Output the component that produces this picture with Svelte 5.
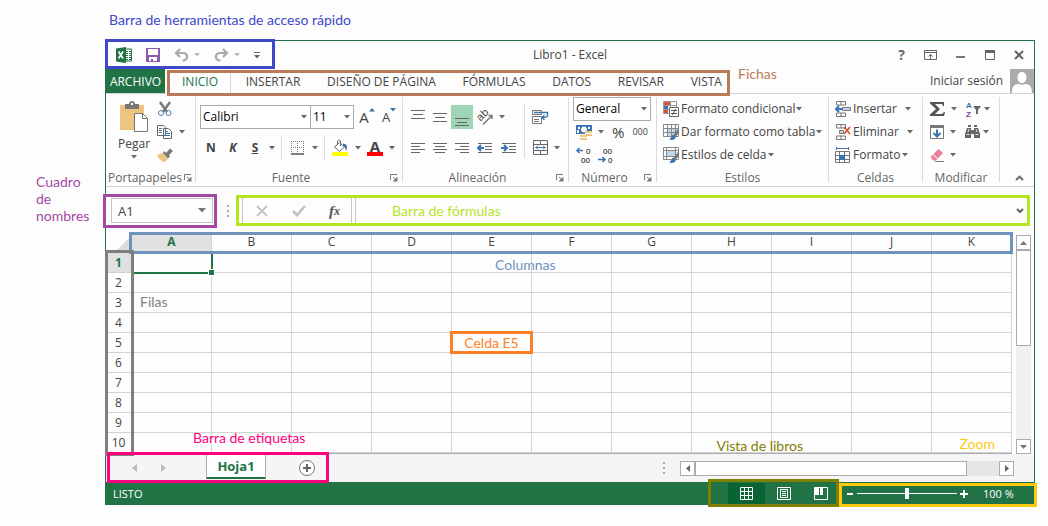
<script>
	const tabs = ['INICIO', 'INSERTAR', 'DISEÑO DE PÁGINA', 'FÓRMULAS', 'DATOS', 'REVISAR', 'VISTA'];
	const columns = ['A', 'B', 'C', 'D', 'E', 'F', 'G', 'H', 'I', 'J', 'K'];
	const rows = [1, 2, 3, 4, 5, 6, 7, 8, 9, 10];

	let activeTab = $state('INICIO');
	let font = $state('Calibri');
	let size = $state('11');
	let format = $state('General');
	let cell = $state('A1');
	let formula = $state('');
	let zoom = $state(100);
</script>

{#snippet arrow()}
	<svg class="arrow" width="6" height="4" viewBox="0 0 6 4"><path d="M0 0h6L3 3.5z" fill="currentColor" /></svg>
{/snippet}

{#snippet drop(name)}
	<button class="drop" aria-label={name}>{@render arrow()}</button>
{/snippet}

{#snippet launcher(name)}
	<button class="launcher" aria-label={name}>
		<svg width="8" height="8" viewBox="0 0 8 8"><path d="M.5 6V.5H7M3 3l3 3" fill="none" stroke="#777" /><path d="M7.5 3v4.5H3V7l4-4z" fill="#777" /></svg>
	</button>
{/snippet}

{#snippet lines(d, name, active)}
	<button class="tool" class:active aria-label={name}>
		<svg width="16" height="20" viewBox="0 0 16 20"><path {d} fill="none" stroke="#666" /></svg>
	</button>
{/snippet}

{#snippet indent(d, name)}
	<button class="tool wide" aria-label={name}>
		<svg width="16" height="12" viewBox="0 0 16 12">
			<path d="M1 1.5h14M8 4.5h7M8 7.5h7M1 10.5h14" stroke="#666" />
			<path {d} fill="none" stroke="#3a73b0" stroke-width="2" />
		</svg>
	</button>
{/snippet}

{#snippet cells()}
	<path d="M1.5 4V.5h9V4M6 .5V4M1.5 12v3.500h9V12M6 12v3.500M1.500 12h9M1.500 4h9" fill="none" stroke="#777" />
{/snippet}

{#snippet brush()}
	<path d="M15.500 4v5l-3 4-2-2z" fill="#777" />
	<path d="M10 10.500l3 2.500c-1 3-4 3.500-7 2.500 2-.5 2-3 4-5z" fill="#3a73b0" />
{/snippet}

<div class="page">
	<p class="note quick-note">Barra de herramientas de acceso rápido</p>
	<p class="note name-note">Cuadro de nombres</p>

	<main class="window">
		<header class="titlebar">
			<div class="quick">
				<svg width="16" height="16" viewBox="0 0 16 16">
					<path d="M9 2h6.500v12H9" fill="#fff" stroke="#217346" />
					<path d="M10 4.500h2M13 4.500h2M10 6.500h2M13 6.500h2M10 8.500h2M13 8.500h2M10 10.500h2M13 10.500h2M10 12.500h2M13 12.500h2" stroke="#217346" />
					<path d="M0 1.500L10 0v16L0 14.500z" fill="#217346" />
					<path d="M2.500 4.500l4.500 7M7 4.500l-4.500 7" stroke="#fff" stroke-width="1.600" />
				</svg>
				<button aria-label="Guardar">
					<svg width="14" height="14" viewBox="0 0 14 14"><path d="M0 0h14v14H0z" fill="#8c5bab" /><path d="M2 1h10v6H2zM3 9h8v4H7v-2H5v2H3z" fill="#fdfdfd" /></svg>
				</button>
				<button class="muted" aria-label="Deshacer">
					<svg width="15" height="14" viewBox="0 0 15 14"><path d="M6 1L2 5l4 4M2 5h7c5 0 5.500 6 1 7.500H8.500" fill="none" stroke="#aaa" stroke-width="2.200" /></svg>
					{@render arrow()}
				</button>
				<button class="muted" aria-label="Rehacer">
					<svg width="15" height="14" viewBox="0 0 15 14"><path d="M9 1l4 4-4 4M13 5H6C1 5 .5 11 5 12.500h1.500" fill="none" stroke="#aaa" stroke-width="2.200" /></svg>
					{@render arrow()}
				</button>
				<button aria-label="Personalizar">
					<svg width="6" height="7" viewBox="0 0 6 7"><path d="M0 0h6v1H0zM0 3h6L3 6.500z" fill="#666" /></svg>
				</button>
			</div>
			<h1>Libro1 - Excel</h1>
			<div class="controls">
				<button class="help" aria-label="Ayuda">?</button>
				<button aria-label="Opciones de la cinta">
					<svg width="13" height="10" viewBox="0 0 13 10"><path d="M.5.5h12v9H.5zM.5 2.500h12M6.500 9V4.500M4.500 6.500l2-2 2 2" fill="none" stroke="#666" /></svg>
				</button>
				<button aria-label="Minimizar">
					<svg width="10" height="10" viewBox="0 0 10 10"><path d="M0 6h9v2H0z" fill="#777" /></svg>
				</button>
				<button aria-label="Maximizar">
					<svg width="10" height="10" viewBox="0 0 10 10"><path d="M.5.5h9v9h-9z" fill="none" stroke="#666" /><path d="M0 0h10v3H0z" fill="#666" /></svg>
				</button>
				<button aria-label="Cerrar">
					<svg width="10" height="10" viewBox="0 0 10 10"><path d="M1 1l8 8M9 1L1 9" stroke="#666" stroke-width="2" /></svg>
				</button>
			</div>
		</header>

		<div class="tabbar">
			<button class="file">ARCHIVO</button>
			<nav>
				{#each tabs as tab}
					<button class:current={tab === activeTab} onclick={() => (activeTab = tab)}>{tab}</button>
				{/each}
			</nav>
			<span class="note tabs-note">Fichas</span>
			<a class="signin" href="#cuenta">Iniciar sesión</a>
			<svg width="24" height="24" viewBox="0 0 24 24"><path d="M0 0h24v24H0z" fill="#ababab" /><path d="M12 3c6 0 6 11 0 11S6 3 12 3zM2 24c0-6 2-9 7-9l3 1 3-1c5 0 7 3 7 9z" fill="#fff" /></svg>
		</div>

		<div class="ribbon">
			<section>
				<div class="body clipboard">
					<button class="paste">
						<svg width="30" height="32" viewBox="0 0 30 32">
							<path d="M1 4h24v25H1z" fill="#edc57e" />
							<path d="M6 8V3h4c0-4 6-4 6 0h4v5z" fill="#777" /><path d="M12 2h2v2h-2z" fill="#fff" />
							<path d="M15.500 12.500h8l5 5v13h-13z" fill="#fff" stroke="#777" /><path d="M23.500 12.500v5h5" fill="none" stroke="#777" />
						</svg>
						Pegar
						{@render arrow()}
					</button>
					<div class="stack">
						<button aria-label="Cortar">
							<svg width="16" height="16" viewBox="0 0 16 16"><path d="M3 1l7 10M13 1L6 11" stroke="#777" stroke-width="2.400" /><circle cx="4" cy="12" r="2.500" fill="none" stroke="#4a80b5" /><circle cx="11.500" cy="12" r="2.500" fill="none" stroke="#4a80b5" /></svg>
						</button>
						<button aria-label="Copiar">
							<svg width="16" height="16" viewBox="0 0 16 16">
								<path d="M.5 1.500h6l2 2v8h-8zM6.500 4.500h5l3 3v7h-8z" fill="#fff" stroke="#666" />
								<path d="M2 4.500h3M2 6.500h3M2 8.500h3M8 7.500h3M8 9.500h5M8 11.500h5" stroke="#3a73b0" />
							</svg>
							{@render arrow()}
						</button>
						<button aria-label="Copiar formato">
							<svg width="16" height="16" viewBox="0 0 16 16"><path d="M6 6l5 6-4 3.500C4 14 1 11 0 8z" fill="#edc57e" /><path d="M7 4l2 2 4-4.500 3 2.500-4 4 1 1.500-2 2-5-5.500z" fill="#777" /></svg>
						</button>
					</div>
				</div>
				<footer><h2>Portapapeles</h2>{@render launcher('Portapapeles')}</footer>
			</section>

			<section>
				<div class="body two">
					<div class="row">
						<label class="select font">
							<select aria-label="Fuente" bind:value={font}><option>Calibri</option><option>Arial</option></select>
							{@render arrow()}
						</label>
						<label class="select size">
							<select aria-label="Tamaño" bind:value={size}><option>11</option><option>12</option></select>
							{@render arrow()}
						</label>
						<button class="tool letter" aria-label="Aumentar tamaño">A<svg width="6" height="12" viewBox="0 0 6 12"><path d="M0 3.500L3 0l3 3.500z" fill="#3a73b0" /></svg></button>
						<button class="tool letter small" aria-label="Disminuir tamaño">A<svg width="6" height="12" viewBox="0 0 6 12"><path d="M0 0h6L3 3.500z" fill="#3a73b0" /></svg></button>
					</div>
					<div class="row">
						<button class="tool"><b>N</b></button>
						<button class="tool"><b><i>K</i></b></button>
						<button class="tool"><b><u>S</u></b></button>
						{@render drop('Subrayado')}
						<hr />
						<button class="tool wide" aria-label="Bordes">
							<svg width="13" height="14" viewBox="0 0 13 14"><path d="M0 .5h13M0 6.500h13M.5 0v13M6.500 0v13M12.500 0v13" stroke="#777" stroke-dasharray="1 1" /><path d="M0 13h13" stroke="#555" stroke-width="1.500" /></svg>
						</button>
						{@render drop('Bordes')}
						<hr />
						<button class="tool wide" aria-label="Color de relleno">
							<svg width="16" height="16" viewBox="0 0 16 16"><path d="M11 4c4-1 5 4 3 7-1-2 0-4-3-5z" fill="#3a73b0" /><path d="M7.500 2.500l5 4.500-5 4.500-5-4.500z" fill="#fff" stroke="#666" /><path d="M5.500 5V1c1-1.200 2.500-1.200 3 0v5" fill="none" stroke="#666" /><path d="M0 12h16v4H0z" fill="#ffff00" /></svg>
						</button>
						{@render drop('Color de relleno')}
						<button class="tool fontcolor" aria-label="Color de fuente"><b>A</b></button>
						{@render drop('Color de fuente')}
					</div>
				</div>
				<footer><h2>Fuente</h2>{@render launcher('Fuente')}</footer>
			</section>

			<section>
				<div class="body align">
					<div class="two">
						<div class="row">
							{@render lines('M1 3.500h14M3 7.500h10M1 11.500h14', 'Alinear arriba')}
							{@render lines('M1 6.500h14M3 10.500h10M1 14.500h14', 'Alinear en el medio')}
							{@render lines('M1 11.500h14M3 15.500h10M1 18.500h14', 'Alinear abajo', true)}
							<button class="tool wide" aria-label="Orientación">
								<svg width="18" height="18" viewBox="0 0 18 18"><text class="slanted" x="1" y="11" transform="rotate(-45 6 8)" fill="#444">ab</text><path d="M7 16.500L16 7.500M12.500 7.500H16V11" fill="none" stroke="#777" stroke-width="1.500" /></svg>
							</button>
							{@render drop('Orientación')}
						</div>
						<div class="row">
							{@render lines('M1 5.500h14M1 8.500h9M1 11.500h14M1 14.500h9', 'Alinear a la izquierda')}
							{@render lines('M1 5.500h14M3 8.500h10M1 11.500h14M3 14.500h10', 'Centrar')}
							{@render lines('M1 5.500h14M6 8.500h9M1 11.500h14M6 14.500h9', 'Alinear a la derecha')}
							{@render indent('M7 6H1M4 3L1 6l3 3', 'Disminuir sangría')}
							{@render indent('M0 6h6M3 3l3 3-3 3', 'Aumentar sangría')}
						</div>
					</div>
					<hr />
					<div class="two">
						<div class="row">
							<button class="tool wide" aria-label="Ajustar texto">
								<svg width="16" height="16" viewBox="0 0 16 16"><path d="M.5 1.500h9v4h-9zM.5 7.500h9v7h-9zM2 10.500h5M2 12.500h5" fill="none" stroke="#777" /><path d="M2 3.500h13.500v3c0 1.500-1 2-5 2M12.500 6l-2.500 2.500 2.500 2.500" fill="none" stroke="#3a73b0" stroke-width="1.400" /></svg>
							</button>
						</div>
						<div class="row">
							<button class="tool wide" aria-label="Combinar y centrar">
								<svg width="15" height="15" viewBox="0 0 15 15"><path d="M.5.5h14v14H.5zM.5 4.500h14M.5 10.500h14M7.500.5v4M7.500 10.500v4" fill="none" stroke="#666" /><path d="M2.500 7.500h10M5 5.500l-2 2 2 2M10 5.500l2 2-2 2" fill="none" stroke="#3a73b0" /></svg>
							</button>
							{@render drop('Combinar')}
						</div>
					</div>
				</div>
				<footer><h2>Alineación</h2>{@render launcher('Alineación')}</footer>
			</section>

			<section>
				<div class="body stack number">
					<label class="select">
						<select aria-label="Formato de número" bind:value={format}><option>General</option><option>Moneda</option></select>
						{@render arrow()}
					</label>
					<div class="row">
						<button aria-label="Moneda">
							<svg width="16" height="16" viewBox="0 0 16 16"><path d="M0 1h16v9H0z" fill="#3a73b0" /><path d="M2 3h2v2H2zM12 3h2v2h-2zM5 5.500C5 1.500 11 1.500 11 5.500S5 9.500 5 5.500zM1 6h2v3H1z" fill="#fff" /><path d="M9 7h7v5H9zM4 11h7v5H4z" fill="#edc57e" /><path d="M9 9.500h7M4 13.500h7" stroke="#fff" /></svg>
						</button>
						{@render drop('Moneda')}
						<button class="percent">%</button>
						<button class="thousands">000</button>
					</div>
					<div class="row decimals">
						<button aria-label="Aumentar decimales">
							<svg width="16" height="18" viewBox="0 0 16 18"><path d="M7 4.500H1M3.500 2L1 4.500 3.500 7" fill="none" stroke="#3a73b0" stroke-width="1.500" /><text x="10" y="8">0</text><text x="5" y="17">00</text></svg>
						</button>
						<button aria-label="Disminuir decimales">
							<svg width="16" height="18" viewBox="0 0 16 18"><path d="M0 13.500h7M4.500 11L7 13.500 4.500 16" fill="none" stroke="#3a73b0" stroke-width="1.500" /><text x="5" y="8">00</text><text x="10" y="17">0</text></svg>
						</button>
					</div>
				</div>
				<footer><h2>Número</h2>{@render launcher('Número')}</footer>
			</section>

			<section>
				<div class="body stack labelled">
					<button>
						<svg width="16" height="16" viewBox="0 0 16 16"><path d="M.5.5h13v12H.5zM.5 4.500h13M.5 8.500h13M7.500.5v12" fill="none" stroke="#999" /><path d="M1 1h6v3H1zM1 9h4v3H1z" fill="#d65532" /><path d="M1 5h4v3H1z" fill="#3a73b0" /><path d="M6.500 6.500h9v9h-9z" fill="#fff" stroke="#666" /><path d="M8 9.500h6M8 12.500h6M12.500 8l-3 6" stroke="#555" /></svg>
						Formato condicional{@render arrow()}
					</button>
					<button>
						<svg width="16" height="16" viewBox="0 0 16 16"><path d="M5 5h9v7H5z" fill="#c3d5e8" /><path d="M.5.5h15v12H.5zM.5 4.500h15M.5 8.500h15M4.500.5v12M8.500.5v12M12.500.5v12" fill="none" stroke="#888" />{@render brush()}</svg>
						Dar formato como tabla{@render arrow()}
					</button>
					<button>
						<svg width="16" height="16" viewBox="0 0 16 16"><path d="M4 4h9v6H4z" fill="#c3d5e8" /><path d="M.5.5h15v12H.5zM.5 3.500h15M.5 9.500h15M3.500.5v12M12.500.5v12" fill="none" stroke="#888" />{@render brush()}</svg>
						Estilos de celda{@render arrow()}
					</button>
				</div>
				<footer><h2>Estilos</h2></footer>
			</section>

			<section>
				<div class="body stack labelled">
					<button class="spaced">
						<svg width="16" height="16" viewBox="0 0 16 16">{@render cells()}<path d="M7.500 6.500h8v3h-8z" fill="#c3d5e8" stroke="#777" /><path d="M8 8H1M4 5L1 8l3 3" fill="none" stroke="#3a73b0" stroke-width="2" /></svg>
						Insertar{@render arrow()}
					</button>
					<button class="spaced">
						<svg width="16" height="16" viewBox="0 0 16 16">{@render cells()}<path d="M4.500 6.500h4v3h-4z" fill="#c3d5e8" stroke="#777" /><path d="M9 3l6 7M15 3l-6 7" stroke="#d65532" stroke-width="1.800" /></svg>
						Eliminar{@render arrow()}
					</button>
					<button>
						<svg width="16" height="16" viewBox="0 0 16 16"><path d="M1.500 0v3M13.500 0v3M2 1.500h11" stroke="#3a73b0" /><path d="M.5 4.500h14v11H.5zM.5 8.500h14M.5 12.500h14M4.500 4.500v11M9.500 4.500v11" fill="none" stroke="#777" /><path d="M4 8h6v5H4z" fill="#3a73b0" /></svg>
						Formato{@render arrow()}
					</button>
				</div>
				<footer><h2>Celdas</h2></footer>
			</section>

			<section>
				<div class="body modify">
					<button aria-label="Autosuma">
						<svg width="15" height="16" viewBox="0 0 15 16"><path d="M0 1h14v4h-1l-1-2H5l5 5-5 5h7l2-2h1l-1 4H0v-1.500L6 8 0 2.500z" fill="#555" /></svg>
						{@render arrow()}
					</button>
					<button aria-label="Ordenar y filtrar">
						<svg width="16" height="18" viewBox="0 0 16 18"><text class="strong" x="1" y="8" fill="#3a73b0">A</text><text class="strong" x="1" y="17" fill="#8040a0">Z</text><path d="M8 6h8l-3 4v4h-2v-4z" fill="#666" /></svg>
						{@render arrow()}
					</button>
					<button aria-label="Rellenar">
						<svg width="14" height="14" viewBox="0 0 14 14"><path d="M.5.5h13v13H.5z" fill="#fff" stroke="#777" /><path d="M0 0h14v3H0z" fill="#777" /><path d="M7 4.500v7M3.500 8L7 11.500 10.500 8" fill="none" stroke="#3a73b0" stroke-width="2" /></svg>
						{@render arrow()}
					</button>
					<button aria-label="Buscar">
						<svg width="15" height="14" viewBox="0 0 15 14"><path d="M2 3h4v2h3V3h4l2 6v4H9V9H6v4H0V9zM3 0h3v2H3zM9 0h3v2H9z" fill="#666" /><path d="M1.500 9.500h3M10.500 9.500h3M4 4L3 7M11 4l1 3" stroke="#fff" stroke-width=".8" /></svg>
						{@render arrow()}
					</button>
					<button aria-label="Borrar">
						<svg width="14" height="14" viewBox="0 0 14 14"><path d="M8.500 1L13 5l-7 7.500H3L.5 9z" fill="#e8829a" /><path d="M3 6.500l4.500 4" stroke="#fff" /><path d="M5 13.500h9" stroke="#777" /></svg>
						{@render arrow()}
					</button>
				</div>
				<footer><h2>Modificar</h2></footer>
			</section>

			<button class="collapse" aria-label="Contraer la cinta">
				<svg width="9" height="6" viewBox="0 0 9 6"><path d="M1 5l3.500-3.500L8 5" fill="none" stroke="#666" stroke-width="1.800" /></svg>
			</button>
		</div>

		<div class="formulabar">
			<div class="namebox">
				<input aria-label="Cuadro de nombres" bind:value={cell} />
				<button aria-label="Nombres"><svg width="8" height="5" viewBox="0 0 8 5"><path d="M0 0h8L4 4.500z" fill="#777" /></svg></button>
			</div>
			<div class="dots"></div>
			<div class="formula">
				<div class="actions">
					<button aria-label="Cancelar"><svg width="12" height="12" viewBox="0 0 12 12"><path d="M1 1l10 10M11 1L1 11" stroke="#c2c2c2" stroke-width="1.800" /></svg></button>
					<button aria-label="Introducir"><svg width="14" height="12" viewBox="0 0 14 12"><path d="M1 6l4 4 8-9" fill="none" stroke="#c2c2c2" stroke-width="2.600" /></svg></button>
					<button class="fx" aria-label="Insertar función">f<sub>x</sub></button>
				</div>
				<input aria-label="Barra de fórmulas" bind:value={formula} />
				<span class="note formula-note">Barra de fórmulas</span>
				<button class="expand" aria-label="Expandir"><svg width="8" height="6" viewBox="0 0 8 6"><path d="M1 1l3 3 3-3" fill="none" stroke="#666" stroke-width="2" /></svg></button>
			</div>
		</div>

		<div class="sheet">
			<div class="grid">
				<table>
					<thead>
						<tr>
							<td class="corner"><svg width="12" height="12" viewBox="0 0 12 12"><path d="M12 0v12H0z" fill="#dcdcdc" /></svg></td>
							{#each columns as column}
								<th scope="col" class:selected={column === 'A'}>{column}</th>
							{/each}
						</tr>
					</thead>
					<tbody>
						{#each rows as row}
							<tr>
								<th scope="row" class:selected={row === 1}>{row}</th>
								{#each columns as column}
									{@const ref = column + row}
									<td class:cursor={ref === 'A1'} class:marked={ref === 'E5'}>
										{#if ref === 'E5'}<span class="note">Celda E5</span>{/if}
										{#if ref === 'A3'}<span class="note rows-note">Filas</span>{/if}
									</td>
								{/each}
							</tr>
						{/each}
					</tbody>
				</table>
				<div class="columns-frame"></div>
				<div class="rows-frame"></div>
				<span class="note columns-note">Columnas</span>
				<span class="note tags-note">Barra de etiquetas</span>
				<span class="note views-note">Vista de libros</span>
				<span class="note zoom-note">Zoom</span>
			</div>
			<div class="vscroll">
				<button aria-label="Subir"><svg width="7" height="4" viewBox="0 0 7 4"><path d="M0 4h7L3.500 0z" fill="#777" /></svg></button>
				<div class="thumb"></div>
				<button aria-label="Bajar"><svg width="7" height="4" viewBox="0 0 7 4"><path d="M0 0h7L3.500 4z" fill="#777" /></svg></button>
			</div>
		</div>

		<div class="sheetbar">
			<div class="sheets">
				<button aria-label="Hoja anterior"><svg width="5" height="8" viewBox="0 0 5 8"><path d="M5 0v8L0 4z" fill="#bbb" /></svg></button>
				<button aria-label="Hoja siguiente"><svg width="5" height="8" viewBox="0 0 5 8"><path d="M0 0v8l5-4z" fill="#bbb" /></svg></button>
				<button class="sheet-tab">Hoja1</button>
				<button class="add" aria-label="Hoja nueva"><svg width="16" height="16" viewBox="0 0 16 16"><circle cx="8" cy="8" r="7.500" fill="#fff" stroke="#777" /><path d="M8 4v8M4 8h8" stroke="#666" stroke-width="2" /></svg></button>
			</div>
			<div class="dots"></div>
			<div class="hscroll">
				<button aria-label="Izquierda"><svg width="4" height="7" viewBox="0 0 4 7"><path d="M4 0v7L0 3.500z" fill="#666" /></svg></button>
				<div class="thumb"></div>
				<button aria-label="Derecha"><svg width="4" height="7" viewBox="0 0 4 7"><path d="M0 0v7l4-3.500z" fill="#666" /></svg></button>
			</div>
		</div>

		<footer class="status">
			<span>LISTO</span>
			<div class="views">
				<button class="on" aria-label="Normal"><svg width="13" height="13" viewBox="0 0 13 13"><path d="M.5.5h12v12H.5zM.5 4.500h12M.5 8.500h12M4.500.5v12M8.500.5v12" fill="none" stroke="#fff" /></svg></button>
				<button aria-label="Diseño de página"><svg width="14" height="13" viewBox="0 0 14 13"><path d="M.5.5h13v12H.5zM3.500 2.500h7v8h-7zM5 4.500h4M5 6.500h4M5 8.500h4" fill="none" stroke="#fff" /></svg></button>
				<button aria-label="Salto de página"><svg width="14" height="13" viewBox="0 0 14 13"><path d="M.5.5h13v12H.5z" fill="none" stroke="#fff" /><path d="M1 1h4v7H1zM6 1h3v7H6z" fill="#fff" /></svg></button>
			</div>
			<div class="zoom">
				<button aria-label="Alejar"><svg width="8" height="8" viewBox="0 0 8 8"><path d="M1 3h6v2H1z" fill="#fff" /></svg></button>
				<input type="range" min="0" max="200" aria-label="Zoom" bind:value={zoom} />
				<button aria-label="Acercar"><svg width="8" height="8" viewBox="0 0 8 8"><path d="M3 0h2v3h3v2H5v3H3V5H0V3h3z" fill="#fff" /></svg></button>
				<output>{zoom} %</output>
			</div>
		</footer>
	</main>
</div>

<style>
	:global(body) {
		background: #fdfdfd;
	}

	.page {
		position: relative;
		padding: 40px 13px 20px 105px;
		font: 12px/16px "Open Sans", "Noto Sans", sans-serif;
		color: #444;
	}

	button, input, select {
		box-sizing: border-box;
		margin: 0;
		padding: 0;
		border: 0;
		background: none;
		font: inherit;
		color: inherit;
	}

	button {
		display: flex;
		align-items: center;
		justify-content: center;
		white-space: nowrap;
	}

	svg {
		display: block;
		flex: none;
		overflow: visible;
	}

	svg text {
		font: 8px "Liberation Sans", sans-serif;
	}

	svg .strong {
		font-weight: bold;
	}

	svg .slanted {
		font-size: 11px;
	}

	.arrow {
		color: #666;
	}

	h1, h2, p {
		margin: 0;
		font-size: 12px;
		font-weight: normal;
	}

	hr {
		align-self: stretch;
		width: 1px;
		margin: 3px;
		border: 0;
		background: #dcdcdc;
	}

	/* coloured labels and frames */
	.note {
		position: absolute;
		font: 14px/17px Lato, "Open Sans", sans-serif;
		white-space: nowrap;
		z-index: 2;
	}

	.quick-note {
		left: 109px;
		top: 11px;
		color: #3f48cc;
	}

	.name-note {
		left: 36px;
		top: 173px;
		width: 60px;
		white-space: normal;
		color: #a349a4;
	}

	.tabs-note {
		left: 632px;
		top: -4px;
		color: #b97a57;
	}

	.formula-note {
		left: 150px;
		color: #b5e61d;
	}

	.columns-note {
		left: calc(50% - 64px);
		top: 24px;
		color: #7092be;
	}

	.rows-note {
		left: 8px;
		top: 0;
		color: #7f7f7f;
	}

	.tags-note {
		left: 87px;
		top: 197px;
		color: #ff0080;
	}

	.views-note {
		right: 209px;
		top: 205px;
		color: #808000;
	}

	.zoom-note {
		right: 17px;
		top: 203px;
		color: #ffc90e;
	}

	.quick::after, nav::after, .namebox::after, .formula::after, .sheets::after, .views::after, .zoom::after, .marked::after {
		content: "";
		position: absolute;
		inset: 0;
		border: 3px solid;
		pointer-events: none;
		z-index: 1;
	}

	.quick, nav, .namebox, .formula, .sheets, .views, .zoom {
		position: relative;
		display: flex;
		align-items: center;
	}

	/* window */
	.window {
		border: 1px solid #217346;
		border-bottom: 0;
	}

	.titlebar {
		position: relative;
		display: flex;
		justify-content: space-between;
		align-items: center;
		height: 28px;
	}

	.quick {
		gap: 14px;
		width: 158px;
		height: 28px;
		padding-left: 10px;
	}

	.quick::after {
		inset: -2px -1px 0 -1px;
		border-color: #3f48cc;
	}

	.quick button {
		gap: 5px;
	}

	.muted .arrow {
		color: #bbb;
	}

	h1 {
		position: absolute;
		left: 50%;
		transform: translateX(-50%);
	}

	.controls {
		display: flex;
		gap: 19px;
		padding-right: 10px;
	}

	.help {
		color: #666;
		font-size: 14px;
		font-weight: bold;
	}

	.tabbar {
		position: relative;
		display: flex;
		align-items: center;
		height: 24px;
	}

	.file {
		width: 59px;
		height: 24px;
		background: #217346;
		color: #fff;
	}

	nav {
		justify-content: space-between;
		width: 563px;
		height: 24px;
		margin: 0 auto 0 2px;
		padding: 0 8px 0 2px;
		box-sizing: border-box;
	}

	nav::after {
		inset: 1px 0 -3px;
		border-color: #b97a57;
	}

	nav button, .file {
		height: 24px;
		padding-top: 2px;
	}

	nav .current {
		padding: 2px 12px 0;
		border: 1px solid #d4d4d4;
		border-width: 0 1px;
		color: #217346;
		margin-right: -12px;
	}

	.signin {
		margin-right: 7px;
		color: inherit;
		text-decoration: none;
	}

	/* ribbon */
	.ribbon {
		display: grid;
		grid-template-columns: 90px 207px 166px 88px 172px 94px 77px 1fr;
		padding-top: 3px;
		border: 1px solid #d4d4d4;
		border-width: 1px 0;
	}

	section {
		border-right: 1px solid #dcdcdc;
		margin-bottom: 4px;
	}

	.body {
		height: 73px;
	}

	section footer {
		display: flex;
		align-items: center;
		height: 16px;
		margin-bottom: -4px;
		color: #666;
	}

	h2 {
		flex: 1;
		text-align: center;
	}

	.launcher {
		width: 8px;
		margin-right: 3px;
	}

	section:nth-child(n + 2) .launcher {
		margin: 0 4px;
	}

	.row {
		display: flex;
		align-items: center;
	}

	.stack {
		display: grid;
		grid-template-rows: repeat(3, 23px);
		align-content: start;
		justify-content: start;
	}

	.two {
		display: grid;
		grid-template-rows: 31px 31px;
		align-content: start;
		padding-top: 4px;
	}

	section .body.two {
		box-sizing: border-box;
		padding-left: 4px;
	}

	.clipboard {
		display: flex;
		padding-left: 13px;
		gap: 8px;
	}

	.clipboard .stack button {
		gap: 6px;
		justify-content: start;
	}

	.paste {
		flex-direction: column;
		justify-content: start;
		gap: 3px;
		width: 30px;
		padding-top: 4px;
	}

	.tool {
		width: 22px;
		height: 24px;
	}

	.wide {
		width: 24px;
	}

	.active {
		background: #9fd5b7;
	}

	.drop {
		width: 12px;
		height: 24px;
	}

	.letter {
		font-size: 15px;
		margin-left: 2px;
	}

	.small {
		font-size: 13px;
		margin-left: 0;
	}

	.letter svg {
		align-self: start;
		margin-top: 3px;
	}

	.fontcolor {
		width: 16px;
		height: 16px;
		margin: 0 3px;
		border-bottom: 4px solid #f00;
		font-size: 15px;
		line-height: 12px;
	}

	.select {
		position: relative;
		display: block;
		height: 24px;
	}

	.select select {
		width: 100%;
		height: 24px;
		padding-left: 2px;
		border: 1px solid #ababab;
		background: #fff;
		appearance: none;
		color: #000;
	}

	.select .arrow {
		position: absolute;
		right: 4px;
		top: 10px;
		pointer-events: none;
	}

	.font {
		width: 111px;
	}

	.size {
		width: 44px;
		margin-left: -1px;
	}

	.align {
		display: flex;
		padding-left: 4px;
	}

	.align > hr {
		height: 54px;
		align-self: start;
		margin: 7px 3px 0;
	}

	.align .drop {
		width: 10px;
	}

	.number {
		padding-left: 4px;
		grid-template-columns: 78px;
		justify-content: start;
	}

	.number .row {
		gap: 3px;
		padding-left: 3px;
	}

	.number .decimals {
		gap: 6px;
	}

	.percent {
		font-size: 15px;
		padding: 0 5px 0 2px;
	}

	.thousands {
		font-size: 9px;
	}

	.labelled {
		padding-left: 6px;
	}

	.labelled button {
		gap: 2px;
		justify-content: start;
	}

	.labelled .arrow {
		margin-left: -1px;
	}

	.labelled .spaced .arrow {
		margin-left: 6px;
	}

	.modify {
		display: grid;
		grid-template: repeat(3, 23px) / 35px 30px;
		align-content: start;
		padding-left: 7px;
	}

	.modify button {
		gap: 6px;
		justify-content: start;
	}

	.modify button:nth-child(even) {
		gap: 3px;
	}

	.collapse {
		align-self: end;
		justify-self: end;
		margin: 0 10px 5px 0;
	}

	/* name box and formula bar */
	.formulabar {
		display: flex;
		align-items: center;
		height: 25px;
		padding: 11px 7px 9px 5px;
	}

	.namebox {
		justify-content: space-between;
		width: 102px;
		height: 25px;
		box-sizing: border-box;
		border: 1px solid #c6c6c6;
		padding: 0 6px;
	}

	.namebox input {
		width: 60px;
		font-size: 13px;
	}

	.namebox::after {
		inset: -5px -5px -6px -9px;
		border-color: #a349a4;
	}

	.dots {
		width: 2px;
		height: 12px;
		background: repeating-linear-gradient(#aaa 0 2px, transparent 2px 5px);
	}

	.formulabar .dots {
		margin: 0 13px 0 14px;
	}

	.formula {
		flex: 1;
		height: 25px;
	}

	.formula::after {
		inset: -3px -3px -3px -6px;
		border-color: #b5e61d;
	}

	.actions {
		display: flex;
		align-items: center;
		justify-content: space-between;
		box-sizing: border-box;
		width: 110px;
		height: 25px;
		padding: 0 11px 0 13px;
		border: 1px solid #c6c6c6;
		border-width: 0 1px;
	}

	.fx {
		font: italic bold 15px/16px "Liberation Serif", serif;
		color: #555;
	}

	.fx sub {
		font-size: 12px;
	}

	.formula input {
		flex: 1;
		height: 25px;
		margin-left: 3px;
		border-left: 1px solid #c6c6c6;
		outline: 0;
	}

	.expand {
		margin-right: 3px;
	}

	/* grid */
	.sheet {
		display: flex;
	}

	.grid {
		position: relative;
		flex: 1;
		border-bottom: 1px solid #ababab;
	}

	table {
		width: 100%;
		table-layout: fixed;
		border-collapse: separate;
		border-spacing: 0;
	}

	th, td {
		position: relative;
		box-sizing: border-box;
		height: 20px;
		padding: 0;
		border: 1px solid #d4d4d4;
		border-width: 0 1px 1px 0;
		font-weight: normal;
		text-align: center;
		line-height: 16px;
	}

	thead th, .corner {
		height: 21px;
	}

	.corner {
		width: 26px;
		border: 0;
	}

	.corner svg {
		margin: 2px 0 0 11px;
	}

	.selected {
		background: #e1e1e1;
		color: #217346;
		font-weight: bold;
	}

	.cursor::before {
		content: "";
		position: absolute;
		inset: 0 -2px -2px -1px;
		border: 2px solid #217346;
		border-width: 0 2px 2px 0;
		z-index: 1;
	}

	.cursor::after {
		content: "";
		position: absolute;
		right: -4px;
		bottom: -4px;
		width: 5px;
		height: 5px;
		border: 1px solid #fff;
		background: #217346;
		z-index: 1;
	}

	.marked {
		color: #ff7f27;
	}

	.marked::after {
		inset: -2px;
	}

	.marked .note {
		position: relative;
	}

	.columns-frame, .rows-frame {
		position: absolute;
		border: 3px solid #7092be;
		pointer-events: none;
		z-index: 1;
	}

	.columns-frame {
		inset: 0 -1px auto 23px;
		height: 16px;
	}

	.rows-frame {
		left: -1px;
		top: 18px;
		bottom: -3px;
		width: 23px;
		border-color: #7f7f7f;
	}

	.vscroll {
		display: flex;
		flex-direction: column;
		width: 15px;
		margin: 3px 3px 0 4px;
		background: #f0f0f0;
	}

	.vscroll button, .hscroll button, .thumb {
		box-sizing: border-box;
		border: 1px solid #ababab;
		background: #fff;
	}

	.vscroll button, .hscroll button {
		width: 15px;
		height: 15px;
	}

	.vscroll .thumb {
		height: 96px;
		margin-bottom: auto;
	}

	/* sheet tabs and status */
	.sheetbar {
		display: flex;
		align-items: center;
		height: 28px;
		padding-right: 20px;
		background: #f5f5f5;
	}

	.sheets {
		width: 222px;
		height: 28px;
		margin: 0 auto 0 1px;
	}

	.sheets::after {
		inset: -2px 0 -1px;
		border-color: #ff0080;
	}

	.sheets button:first-child {
		margin: 0 24px 0 25px;
	}

	.sheet-tab {
		align-self: start;
		width: 60px;
		height: 25px;
		margin: 0 33px 0 40px;
		border: 1px solid #ababab;
		border-width: 0 1px;
		border-bottom: 2px solid #217346;
		background: #fff;
		color: #217346;
		font-size: 13px;
		font-weight: bold;
	}

	.hscroll {
		display: flex;
		width: 334px;
		margin-left: 15px;
		background: #e6e6e6;
	}

	.hscroll .thumb {
		width: 272px;
		margin-right: auto;
	}

	.status {
		display: flex;
		align-items: center;
		height: 23px;
		margin: 0 -1px;
		padding-left: 8px;
		background: #217346;
		color: #fff;
		font-size: 11px;
	}

	.status > span {
		margin-right: auto;
	}

	.views {
		height: 23px;
		width: 131px;
		box-sizing: border-box;
		padding-left: 20px;
	}

	.views::after {
		inset: -3px 0 -2px;
		border-color: #808000;
	}

	.views button {
		width: 38px;
		height: 21px;
	}

	.views .on {
		background: #0a6332;
	}

	.zoom {
		width: 196px;
		height: 23px;
		box-sizing: border-box;
		padding-left: 7px;
		gap: 3px;
	}

	.zoom::after {
		inset: 1px -2px -2px 0;
		border-color: #ffc90e;
	}

	.zoom input {
		width: 100px;
		height: 12px;
		appearance: none;
		background: linear-gradient(#fff, #fff) center / 100% 1px no-repeat;
	}

	.zoom input::-webkit-slider-thumb {
		appearance: none;
		width: 4px;
		height: 11px;
		background: #fff;
	}

	output {
		margin-left: 12px;
	}
</style>
